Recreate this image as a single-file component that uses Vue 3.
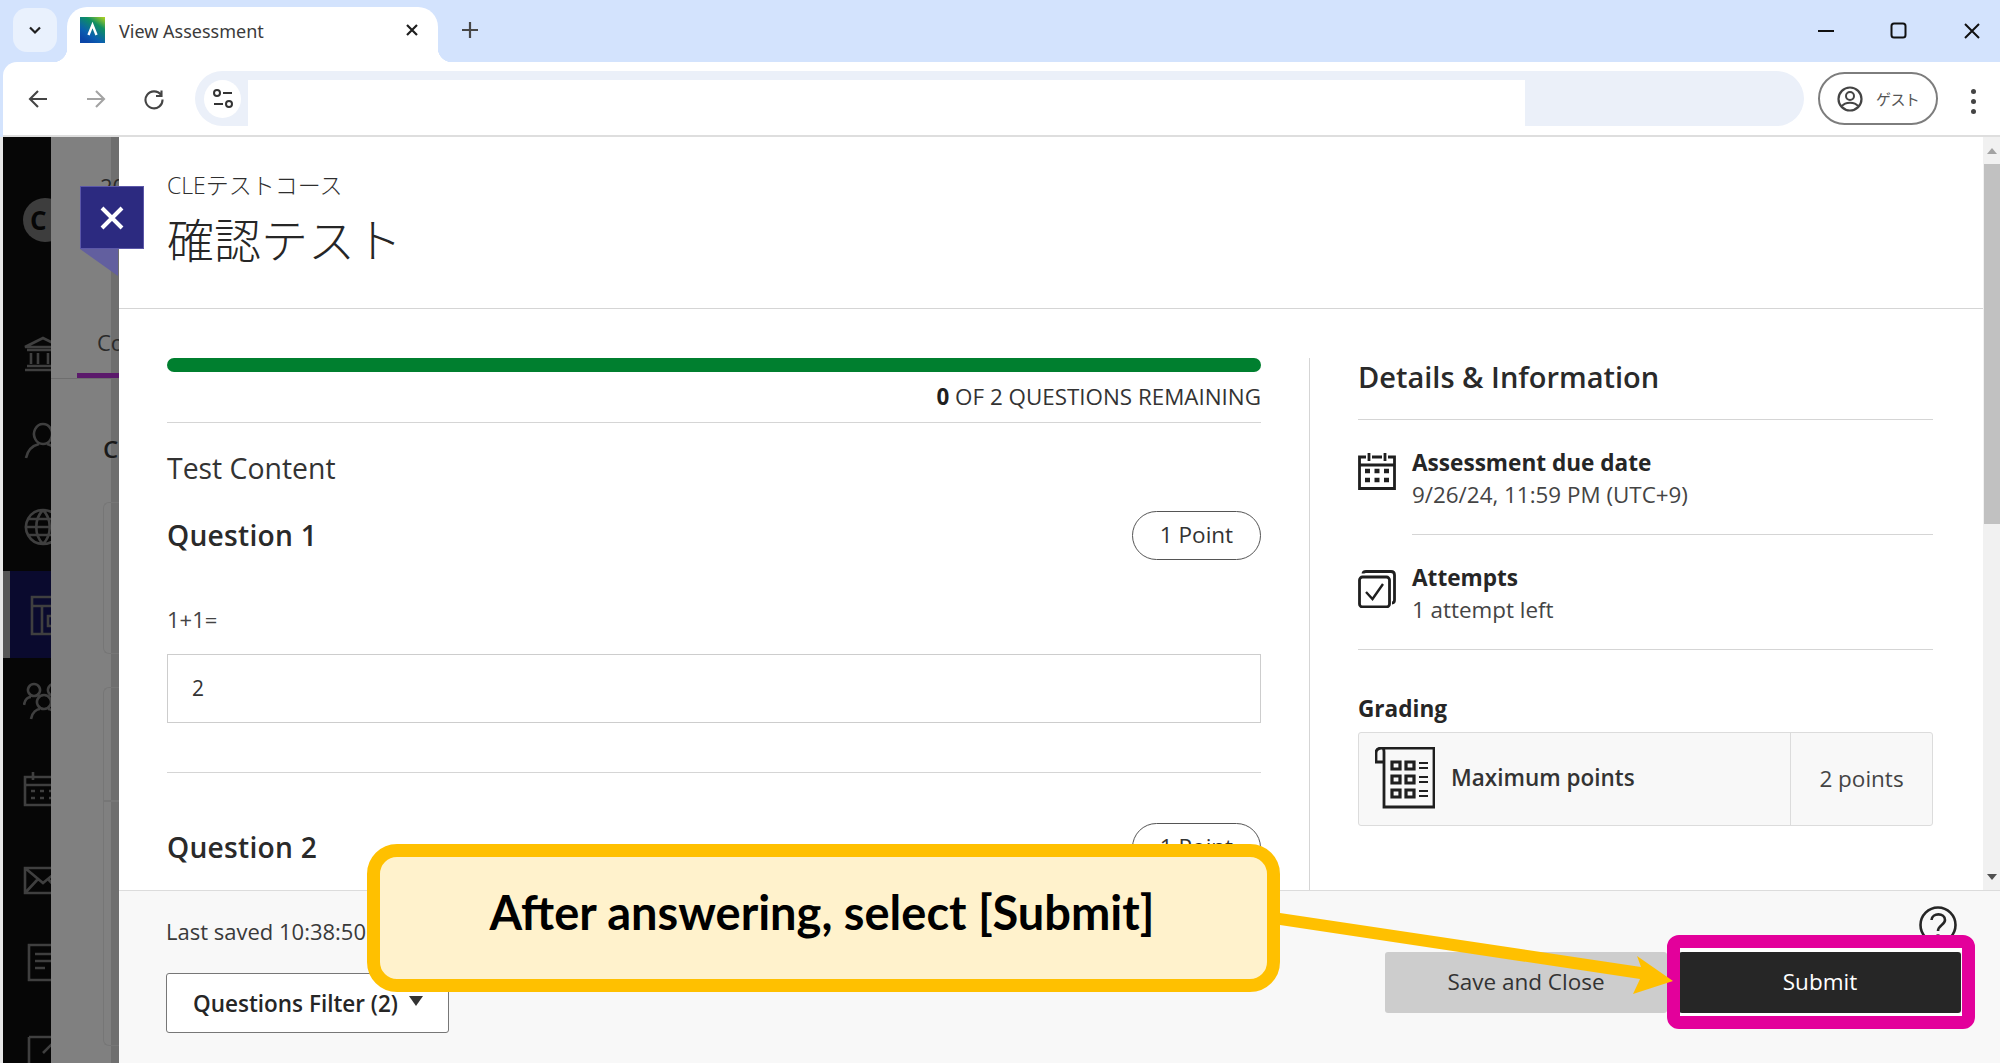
<script setup>
const navIcons = [
  'M2 14 L20 5 L38 14 Z M4 17 H36 M8 20 V31 M15 20 V31 M25 20 V31 M32 20 V31 M4 33 H36 M2 37 H38',
  'M20 4 a9 10 0 1 0 0.01 0 Z M3 38 C5 28 12 25 16 24 M37 38 C35 28 28 25 24 24',
  'M20 3 a17 17 0 1 0 0.01 0 Z M3 20 H37 M5 12 H35 M5 28 H35 M20 3 C11 12 11 28 20 37 M20 3 C29 12 29 28 20 37',
  'M9 3 H44 V40 H9 Z M9 12 H44 M19 12 V40 M25 22 H40 V32 H25 Z',
  'M11 3 a6 6 0 1 0 0.01 0 Z M31 3 a6 6 0 1 0 0.01 0 Z M21 14 a7 7 0 1 0 0.01 0 Z M1 24 C2 18 5 16 8 16 M40 24 C39 18 36 16 33 16 M8 38 C9 31 14 28 17 28 M34 38 C33 31 28 28 25 28',
  'M2 9 H38 V37 H2 Z M2 17 H38 M10 4 V12 M30 4 V12 M17 9 H23 M8 23 H12 M17 23 H21 M26 23 H30 M8 30 H12 M17 30 H21 M26 30 H30',
  'M2 13 H38 V38 H2 Z M2 13 L20 28 L38 13 M2 38 L15 24 M38 38 L25 24',
  'M6 3 H36 V38 H6 Z M12 12 H30 M12 19 H30 M12 26 H22',
  'M6 8 H28 M6 8 V38 H36 V18 M20 24 L38 6'
]
</script>

<template>
  <div class="window">
    <header class="tabbar">
      <button class="tabmenu" aria-label="Tab search">
        <svg width="16" height="16" viewBox="0 0 16 16"><path d="M3 5.5 L8 10.5 L13 5.5" fill="none" stroke="#1f1f1f" stroke-width="2.2"/></svg>
      </button>
      <div class="tab">
        <svg class="favicon" width="25" height="26" viewBox="0 0 25 26">
          <defs>
            <linearGradient id="fav" x1="1" y1="0" x2="0.35" y2="1">
              <stop offset="0" stop-color="#b5d51f"/>
              <stop offset="0.35" stop-color="#0e8f62"/>
              <stop offset="0.75" stop-color="#0a5fb0"/>
              <stop offset="1" stop-color="#0b46a8"/>
            </linearGradient>
          </defs>
          <rect width="25" height="26" fill="url(#fav)"/>
          <path d="M8.5 18 L12.5 8 L16.5 18" fill="none" stroke="#fff" stroke-width="2.4"/>
        </svg>
        <span class="tabtitle">View Assessment</span>
        <svg class="tabclose" width="14" height="14" viewBox="0 0 14 14"><path d="M2 2 L12 12 M12 2 L2 12" stroke="#1f1f1f" stroke-width="2.2"/></svg>
      </div>
      <svg class="newtab" width="18" height="18" viewBox="0 0 18 18"><path d="M9 1 V17 M1 9 H17" stroke="#474747" stroke-width="2.2"/></svg>
      <div class="winctl">
        <svg width="18" height="18" viewBox="0 0 18 18"><path d="M1 9 H17" stroke="#111" stroke-width="2"/></svg>
        <svg width="18" height="18" viewBox="0 0 18 18"><rect x="1.5" y="1.5" width="14" height="14" rx="2.5" fill="none" stroke="#111" stroke-width="2"/></svg>
        <svg width="18" height="18" viewBox="0 0 18 18"><path d="M2 2 L16 16 M16 2 L2 16" stroke="#111" stroke-width="2"/></svg>
      </div>
    </header>

    <nav class="toolbar">
      <svg class="navbtn" width="22" height="22" viewBox="0 0 22 22"><path d="M20 11 H3 M11 3 L3 11 L11 19" fill="none" stroke="#444" stroke-width="2.1"/></svg>
      <svg class="navbtn" width="22" height="22" viewBox="0 0 22 22"><path d="M2 11 H19 M11 3 L19 11 L11 19" fill="none" stroke="#a3a3a3" stroke-width="2.1"/></svg>
      <svg class="navbtn" width="22" height="22" viewBox="0 0 22 22"><path d="M18 7 A8.5 8.5 0 1 0 19.5 11.5 M18.5 2.5 V8 H13" fill="none" stroke="#444" stroke-width="2.1"/></svg>
      <div class="omnibox">
        <div class="siteicon">
          <svg width="22" height="22" viewBox="0 0 22 22"><circle cx="5" cy="5" r="3" fill="none" stroke="#333" stroke-width="2"/><path d="M11 5 H20 M2 16 H11" stroke="#333" stroke-width="2"/><circle cx="17" cy="16" r="3" fill="none" stroke="#333" stroke-width="2"/></svg>
        </div>
        <div class="urlmask"></div>
      </div>
      <div class="profile">
        <svg width="26" height="26" viewBox="0 0 26 26"><circle cx="13" cy="13" r="11.5" fill="none" stroke="#444" stroke-width="2.2"/><circle cx="13" cy="10" r="4" fill="none" stroke="#444" stroke-width="2"/><path d="M5 20 C8 15.5 18 15.5 21 20" fill="none" stroke="#444" stroke-width="2"/></svg>
        <span>ゲスト</span>
      </div>
      <div class="kebab"><i></i><i></i><i></i></div>
    </nav>

    <div class="page">
      <aside class="sidebar">
        <div class="logo">C</div>
        <div v-for="(d, i) in navIcons" :key="i" class="navitem" :class="{ active: i === 3 }">
          <svg width="48" height="42" viewBox="0 0 48 42"><path :d="d" fill="none" stroke="#3f3f3f" stroke-width="2.6"/></svg>
        </div>
      </aside>

      <section class="backdrop">
        <div class="bd-date">20</div>
        <div class="bd-tab"><span>Co</span></div>
        <div class="bd-title">C</div>
        <div class="bd-card c1"></div>
        <div class="bd-card c2"></div>
        <div class="bd-card c3"></div>
      </section>

      <main class="modal">
        <div class="upper">
          <div class="content">
            <header class="head">
              <div class="course">CLEテストコース</div>
              <h1 class="title">確認テスト</h1>
            </header>
            <div class="columns">
              <div class="left">
                <div class="progress"></div>
                <div class="remaining"><b>0</b> OF 2 QUESTIONS REMAINING</div>
                <h2 class="section">Test Content</h2>
                <div class="qrow">
                  <h3>Question 1</h3>
                  <span class="pill">1 Point</span>
                </div>
                <p class="prompt">1+1=</p>
                <div class="answer">2</div>
                <div class="qrow second">
                  <h3>Question 2</h3>
                  <span class="pill">1 Point</span>
                </div>
              </div>
              <div class="right">
                <h2 class="dtitle">Details &amp; Information</h2>
                <div class="info">
                  <svg class="infoicon" width="38" height="38" viewBox="0 0 38 38" fill="none" stroke="#1f1f1f" stroke-width="2.8">
                    <path d="M8 5 H1.5 V36.5 H36.5 V5 H30 M14 5 H24 M11 1 V9 M27 1 V9 M1.5 13 H36.5"/>
                    <path d="M7 19 H12 M16.5 19 H21.5 M26 19 H31 M7 28 H12 M16.5 28 H21.5 M26 28 H31" stroke-width="4.5"/>
                  </svg>
                  <div class="infotext ruled">
                    <strong>Assessment due date</strong>
                    <span>9/26/24, 11:59 PM (UTC+9)</span>
                  </div>
                </div>
                <div class="info ruledall">
                  <svg class="infoicon low" width="38" height="38" viewBox="0 0 38 38" fill="none" stroke="#1f1f1f" stroke-width="2.8">
                    <rect x="1.5" y="7" width="30" height="30" rx="3"/>
                    <path d="M5 3.5 Q5 1.5 8 1.5 H33 Q36.5 1.5 36.5 5 V30 Q36.5 33 34 33"/>
                    <path d="M8 22 L14.5 29 L25 14" stroke-width="2.4"/>
                  </svg>
                  <div class="infotext">
                    <strong>Attempts</strong>
                    <span>1 attempt left</span>
                  </div>
                </div>
                <h3 class="grading">Grading</h3>
                <div class="gradebox">
                  <div class="gradelabel">
                    <svg width="60" height="62" viewBox="0 0 60 62" fill="none" stroke="#1f1f1f" stroke-width="2.8">
                      <path d="M9 15 V60 H59 V1 H7 Q1 1 1 6 V15 H9 V5 Q9 1 7 1"/>
                      <path d="M17 15 h8 v7 h-8 Z M31 15 h8 v7 h-8 Z M17 29 h8 v7 h-8 Z M31 29 h8 v7 h-8 Z M17 43 h8 v7 h-8 Z M31 43 h8 v7 h-8 Z" stroke-width="3.2"/>
                      <path d="M44 16 H53 M44 21 H53 M44 30 H53 M44 35 H53 M44 44 H53 M44 49 H53" stroke-width="2.2"/>
                    </svg>
                    <span>Maximum points</span>
                  </div>
                  <div class="gradeval">2 points</div>
                </div>
              </div>
            </div>
          </div>
          <div class="scrollbar">
            <i class="up"></i>
            <div class="thumb"></div>
            <i class="down"></i>
          </div>
        </div>

        <footer class="foot">
          <div class="footleft">
            <div class="saved">Last saved 10:38:50 AM</div>
            <button class="filter">Questions Filter (2)<i></i></button>
          </div>
          <div class="footright">
            <svg class="help" width="38" height="38" viewBox="0 0 38 38" fill="none" stroke="#262626" stroke-width="2.6"><circle cx="19" cy="19" r="17.5"/><path d="M12.5 14 C13 6.5 26 6.5 26 14 C26 19 19 19 19 25"/><circle cx="19" cy="31" r="1.5" fill="#262626"/></svg>
            <div class="actions">
              <button class="save">Save and Close</button>
              <button class="submit">Submit</button>
            </div>
          </div>
        </footer>
      </main>

      <div class="closebtn">
        <svg width="28" height="28" viewBox="0 0 28 28"><path d="M4 4 L24 24 M24 4 L4 24" stroke="#fff" stroke-width="4"/></svg>
      </div>
      <div class="fold"></div>
    </div>

    <div class="callout">After answering, select [Submit]</div>
    <div class="highlight"></div>
    <svg class="arrow" width="2000" height="1063" viewBox="0 0 2000 1063">
      <path d="M1280 913 L1641 967 L1637 956 L1673 981 L1633 994 L1640 979 L1280 925 Z" fill="#ffc000"/>
    </svg>
  </div>
</template>

<style>
html, body { margin: 0; background: #fff; }
</style>

<style scoped>
* { box-sizing: border-box; }
.window {
  position: relative;
  width: 2000px;
  height: 1063px;
  overflow: hidden;
  display: flex;
  flex-direction: column;
  background: #d3e3fd;
  font-family: "Open Sans", "Noto Sans CJK JP", sans-serif;
  color: #333;
}
h1, h2, h3, p { margin: 0; font-weight: normal; }
button { font-family: inherit; border: 0; padding: 0; }

.tabbar {
  height: 62px;
  flex: none;
  display: flex;
  align-items: flex-start;
  padding-left: 13px;
  background: #d3e3fd;
  font-family: "Noto Sans", "Noto Sans CJK JP", sans-serif;
}
.tabmenu {
  width: 44px;
  height: 44px;
  margin-top: 8px;
  border-radius: 14px;
  background: #e9f1fd;
  display: flex;
  align-items: center;
  justify-content: center;
}
.tab {
  position: relative;
  width: 371px;
  height: 55px;
  margin: 7px 0 0 10px;
  padding: 10px 19px 0 13px;
  background: #fff;
  border-radius: 20px 20px 0 0;
  display: flex;
  align-items: flex-start;
}
.tab::before, .tab::after {
  content: "";
  position: absolute;
  bottom: 0;
  width: 14px;
  height: 14px;
}
.tab::before { left: -14px; background: radial-gradient(circle at 0 0, transparent 14px, #fff 14.5px); }
.tab::after { right: -14px; background: radial-gradient(circle at 100% 0, transparent 14px, #fff 14.5px); }
.favicon { flex: none; }
.tabtitle { margin-left: 14px; font-size: 18px; line-height: 28px; color: #3b3b3b; }
.tabclose { margin: 6px 0 0 auto; }
.newtab { margin: 21px 0 0 23px; }
.winctl {
  margin-left: auto;
  margin-top: 22px;
  padding-right: 19px;
  display: flex;
  gap: 55px;
}

.toolbar {
  height: 75px;
  flex: none;
  margin-left: 3px;
  background: #fff;
  border-top-left-radius: 14px;
  border-bottom: 2px solid #dedede;
  display: flex;
  align-items: flex-start;
  padding: 9px 0 0 24px;
  font-family: "Noto Sans", "Noto Sans CJK JP", sans-serif;
}
.navbtn { margin: 17px 36px 0 0; flex: none; }
.navbtn:nth-child(3) { margin-right: 30px; }
.omnibox {
  width: 1609px;
  height: 55px;
  border-radius: 28px;
  background: #ebf0f9;
  position: relative;
  padding: 9px 0 0 9px;
  display: flex;
  align-items: flex-start;
}
.siteicon {
  width: 37px;
  height: 38px;
  border-radius: 50%;
  background: #fff;
  display: flex;
  align-items: center;
  justify-content: center;
  flex: none;
}
.urlmask { width: 1277px; height: 46px; margin-left: 7px; background: #fff; }
.profile {
  width: 120px;
  height: 53px;
  margin: 1px 0 0 14px;
  border: 2px solid #7d7d7d;
  border-radius: 27px;
  display: flex;
  align-items: center;
  padding-left: 17px;
  gap: 13px;
  font-size: 15px;
  letter-spacing: -0.6px;
  color: #555;
  flex: none;
}
.kebab {
  margin: 18px 0 0 33px;
  display: flex;
  flex-direction: column;
  gap: 5px;
}
.kebab i { width: 5px; height: 5px; border-radius: 50%; background: #444; display: block; }

.page {
  position: relative;
  flex: 1;
  min-height: 0;
  display: flex;
  background: #808080;
  border-left: 3px solid #e6e6e6;
}
.sidebar {
  width: 48px;
  flex: none;
  background: #060606;
  overflow: hidden;
  padding-top: 61px;
}
.logo {
  width: 44px;
  height: 44px;
  margin: 0 0 68px 20px;
  border-radius: 50%;
  background: #3d3d3d;
  color: #060606;
  font: 700 26px/44px "Open Sans", sans-serif;
  padding-left: 7px;
}
.navitem {
  height: 87px;
  padding-left: 20px;
  display: flex;
  align-items: center;
  width: 90px;
  position: relative;
}
.navitem svg { flex: none; }
.navitem.active { background: #0a0a2e; }
.navitem.active::before {
  content: "";
  position: absolute;
  left: 0;
  top: 0;
  width: 7px;
  height: 100%;
  background: #555;
}

.backdrop {
  width: 68px;
  flex: none;
  overflow: hidden;
  position: relative;
  color: #2a2a2a;
  font-size: 22px;
  box-shadow: inset -8px 0 0 rgba(0, 0, 0, .13);
}
.bd-date { margin: 34px 0 0 49px; line-height: 30px; white-space: nowrap; }
.bd-tab {
  margin-top: 125px;
  height: 53px;
  border-bottom: 1px solid #6e6e6e;
  padding-left: 46px;
  position: relative;
  line-height: 30px;
  padding-top: 1px;
  white-space: nowrap;
}
.bd-tab::after {
  content: "";
  position: absolute;
  left: 26px;
  right: 0;
  bottom: 0;
  height: 5px;
  background: #5b1a6b;
}
.bd-title { margin: 53px 0 0 52px; font-size: 24px; font-weight: 600; line-height: 34px; color: #1a1a1a; white-space: nowrap; }
.bd-card { margin-left: 52px; border: 1px solid #767676; border-right: 0; border-radius: 6px 0 0 6px; }
.c1 { margin-top: 36px; height: 152px; }
.c2 { margin-top: 33px; height: 114px; border-radius: 6px 0 0 0; }
.c3 { height: 245px; border-radius: 0 0 0 6px; }

.modal {
  flex: 1;
  min-width: 0;
  display: flex;
  flex-direction: column;
  background: #fff;
}
.upper { height: 753px; flex: none; display: flex; }
.content { flex: 1; min-width: 0; }
.head {
  height: 172px;
  padding: 32px 0 0 48px;
  border-bottom: 1px solid #d5d5d5;
}
.course { font-size: 23px; line-height: 32px; font-weight: 300; color: #2e2e2e; }
.title {
  margin-top: 6px;
  font-size: 47px;
  line-height: 62px;
  font-weight: 300;
  color: #262626;
  font-family: "Noto Sans CJK JP", sans-serif;
}
.columns { display: flex; height: 581px; overflow: hidden; padding-left: 48px; }
.left { width: 1094px; flex: none; padding-top: 49px; }
.progress { height: 14px; border-radius: 7px; background: #007f2f; }
.remaining {
  margin-top: 10px;
  padding-bottom: 10px;
  border-bottom: 1px solid #d5d5d5;
  text-align: right;
  font-size: 22.4px;
  line-height: 30px;
  color: #333;
}
.remaining b { font-weight: 700; color: #1f1f1f; }
.section { margin-top: 27px; font-size: 28.4px; line-height: 36px; color: #333; }
.qrow {
  margin-top: 25px;
  display: flex;
  align-items: center;
  justify-content: space-between;
}
.qrow h3 {
  font-size: 28.2px;
  line-height: 40px;
  padding-bottom: 2px;
  font-weight: 600;
  letter-spacing: .25px;
  color: #2a2a2a;
}
.qrow.second { margin-top: 49px; padding-top: 50px; border-top: 1px solid #d5d5d5; }
.pill {
  width: 129px;
  height: 49px;
  border: 1.5px solid #555;
  border-radius: 25px;
  font-size: 22.5px;
  font-weight: 500;
  line-height: 46px;
  text-align: center;
  color: #333;
}
.prompt { margin-top: 45px; font-size: 22px; line-height: 28px; color: #444; }
.answer {
  margin-top: 21px;
  height: 69px;
  border: 1px solid #cdcdcd;
  padding-left: 24px;
  font-size: 21px;
  line-height: 67px;
  color: #333;
}

.right {
  width: 624px;
  flex: none;
  margin: 49px 0 0 48px;
  border-left: 1px solid #d5d5d5;
  padding-left: 48px;
}
.dtitle {
  height: 62px;
  border-bottom: 1px solid #d5d5d5;
  font-size: 29px;
  line-height: 38px;
  font-weight: 600;
  color: #2a2a2a;
}
.info { display: flex; gap: 16px; align-items: flex-start; }
.infoicon { flex: none; margin-top: 32px; }
.infoicon.low { margin-top: 35px; }
.infotext { flex: 1; padding: 28px 0 24px; }
.infotext strong, .infotext span { display: block; line-height: 30px; }
.infotext strong { font-size: 22.6px; font-weight: 700; color: #262626; margin-bottom: 2px; }
.infotext span { font-size: 22.4px; color: #444; }
.ruled { border-bottom: 1px solid #d5d5d5; }
.ruledall { border-bottom: 1px solid #d5d5d5; }
.grading { margin-top: 44px; margin-bottom: 8px; font-size: 22.6px; line-height: 30px; font-weight: 700; color: #262626; }
.gradebox {
  height: 94px;
  display: flex;
  background: #f8f8f8;
  border: 1px solid #dcdcdc;
  border-radius: 3px;
  font-size: 22.5px;
  color: #333;
}
.gradelabel {
  width: 432px;
  border-right: 1px solid #dcdcdc;
  padding: 0 0 3px 16px;
  display: flex;
  align-items: center;
  gap: 16px;
  font-weight: 600;
}
.gradeval { flex: 1; display: flex; align-items: center; justify-content: center; color: #444; padding: 0 0 2px 0; }

.scrollbar {
  width: 17px;
  flex: none;
  background: #f1f1f1;
  position: relative;
  padding-top: 27px;
}
.thumb { height: 360px; background: #c1c1c1; margin-left: 1px; }
.up, .down {
  position: absolute;
  left: 4px;
  width: 0;
  height: 0;
  border-left: 5px solid transparent;
  border-right: 5px solid transparent;
}
.up { top: 11px; border-bottom: 6px solid #a3a3a3; }
.down { bottom: 10px; border-top: 6px solid #505050; }

.foot {
  flex: 1;
  min-height: 0;
  background: #f8f8f8;
  border-top: 1px solid #dcdcdc;
  padding: 0 39px 0 47px;
  display: flex;
  justify-content: space-between;
}
.saved { margin-top: 25px; font-size: 22px; line-height: 30px; color: #3a3a3a; white-space: nowrap; }
.filter {
  margin-top: 27px;
  width: 283px;
  height: 60px;
  background: #fff;
  border: 1.5px solid #777;
  border-radius: 3px;
  display: flex;
  align-items: center;
  padding-left: 26px;
  font-size: 22.5px;
  font-weight: 600;
  color: #262626;
}
.filter i {
  margin-left: 11px;
  margin-bottom: 4px;
  border-left: 7px solid transparent;
  border-right: 7px solid transparent;
  border-top: 10px solid #333;
}
.footright { display: flex; flex-direction: column; align-items: flex-end; padding-top: 15px; }
.help { margin-right: 4px; flex: none; }
.actions { margin-top: 8px; display: flex; }
.actions button { width: 282px; height: 61px; font-size: 22.5px; border-radius: 3px; padding-bottom: 3px; }
.save { background: #cdcdcd; color: #333; margin-right: 12px; }
.submit { background: #262626; color: #fff; }

.closebtn {
  position: absolute;
  left: 77px;
  top: 49px;
  width: 64px;
  height: 63px;
  background: #2c2a80;
  border: 1px solid #5c58a8;
  display: flex;
  align-items: center;
  justify-content: center;
}
.fold {
  position: absolute;
  left: 77px;
  top: 112px;
  width: 38px;
  height: 27px;
  background: #625f9f;
  clip-path: polygon(0 0, 100% 0, 100% 100%);
}

.callout {
  position: absolute;
  left: 367px;
  top: 844px;
  width: 913px;
  height: 148px;
  border: 13px solid #ffc000;
  border-radius: 30px;
  background: #fff2cc;
  color: #000;
  font: 700 47px/1 Lato, "Open Sans", sans-serif;
  display: flex;
  justify-content: center;
  padding-top: 32px;
  padding-right: 3px;
  white-space: nowrap;
}
.highlight {
  position: absolute;
  left: 1667px;
  top: 935px;
  width: 308px;
  height: 94px;
  border: 13px solid #e3009b;
  border-radius: 12px;
}
.highlight::before {
  content: "";
  position: absolute;
  inset: 0;
  border-style: solid;
  border-color: #fff;
  border-width: 4px 0 3px 0;
}
.arrow { position: absolute; left: 0; top: 0; pointer-events: none; }
</style>
